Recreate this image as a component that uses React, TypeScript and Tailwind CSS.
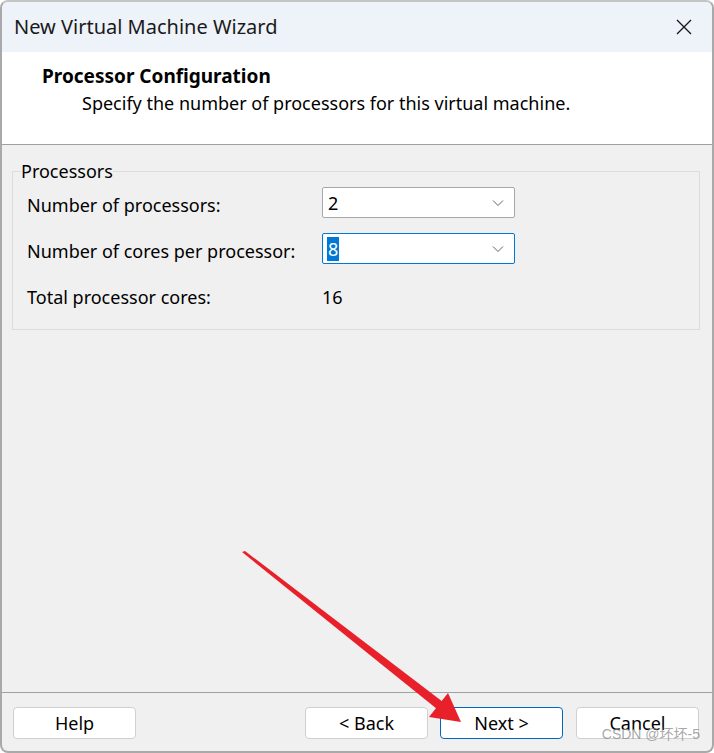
import React from 'react';

const font = { fontFamily: '"Noto Sans", "Open Sans", sans-serif' };

function Chevron() {
  return (
    <svg width="12" height="8" viewBox="0 0 12 8" className="text-[#606060]">
      <path d="M1 1.5 L6 6.5 L11 1.5" fill="none" stroke="currentColor" strokeWidth="1" />
    </svg>
  );
}

function Combo({ value, focused }: { value: string; focused?: boolean }) {
  return (
    <div
      className={
        focused
          ? 'flex h-[31px] w-[193px] items-center justify-between rounded-[2px] border border-[#0078d7] bg-white pl-[4px] pr-[10px]'
          : 'flex h-[31px] w-[193px] items-center justify-between rounded-[2px] border border-[#a8a8a8] bg-white pl-[4px] pr-[10px]'
      }
    >
      {focused ? (
        <span className="bg-[#0078d7] px-[1px] leading-[24px] text-white">{value}</span>
      ) : (
        <span className="px-[1px] leading-[24px] text-black">{value}</span>
      )}
      <Chevron />
    </div>
  );
}

function Btn({ label, primary }: { label: string; primary?: boolean }) {
  return (
    <button
      className={
        primary
          ? 'h-[32px] w-[123px] rounded-[4px] border border-[#0067c0] bg-white text-[18px] text-black'
          : 'h-[32px] w-[123px] rounded-[4px] border border-[#d0d0d0] bg-white text-[18px] text-black'
      }
    >
      {label}
    </button>
  );
}

export default function App() {
  return (
    <div className="h-[753px] w-[714px] bg-white" style={font}>
      <div className="relative flex h-full flex-col overflow-hidden rounded-[8px] border-2 border-[#a9a9a9] border-t-[#c4c4c4] bg-[#f0f0f0]">
        {/* title bar */}
        <div className="flex h-[50px] shrink-0 items-center justify-between bg-[#eef2f9] pl-[12px] pr-[20px]">
          <span className="text-[20px] text-[#1a1a1a]">New Virtual Machine Wizard</span>
          <svg width="16" height="16" viewBox="0 0 16 16">
            <path d="M1 1 L15 15 M15 1 L1 15" stroke="#1a1a1a" strokeWidth="1.4" />
          </svg>
        </div>

        {/* header */}
        <div className="h-[93px] shrink-0 border-b border-[#a0a0a0] bg-white pt-[12px]">
          <div className="pl-[40px] text-[19px] font-bold leading-[24px] text-black">Processor Configuration</div>
          <div className="mt-[3px] pl-[80px] text-[18px] leading-[24px] text-black">
            Specify the number of processors for this virtual machine.
          </div>
        </div>

        {/* body */}
        <div className="flex-1 pt-[15px]">
          <fieldset className="ml-[10px] mr-[12px] h-[170px] border border-[#dcdcdc] pl-[14px]">
            <legend className="ml-[-6px] px-0 text-[18px] leading-[22px] text-black">Processors</legend>
            <div className="mt-[5px] flex flex-col text-[18px] text-black">
              <div className="flex h-[31px] items-center">
                <span className="w-[295px] pt-[6px]">Number of processors:</span>
                <Combo value="2" />
              </div>
              <div className="mt-[15px] flex h-[31px] items-center">
                <span className="w-[295px] pt-[6px]">Number of cores per processor:</span>
                <Combo value="8" focused />
              </div>
              <div className="mt-[15px] flex h-[31px] items-center">
                <span className="w-[295px] pt-[6px]">Total processor cores:</span>
                <span className="pt-[6px]">16</span>
              </div>
            </div>
          </fieldset>
        </div>

        {/* footer */}
        <div className="flex h-[59px] shrink-0 items-start border-t border-[#a0a0a0] pl-[11px] pr-[13px] pt-[14px]">
          <Btn label="Help" />
          <div className="flex-1" />
          <Btn label="< Back" />
          <div className="w-[12px]" />
          <Btn label="Next >" primary />
          <div className="w-[13px]" />
          <Btn label="Cancel" />
        </div>

        {/* watermark */}
        <span
          className="pointer-events-none absolute bottom-[6px] right-[12px] text-[14px] text-[#8a8a8a]/75"
          style={{ fontFamily: '"Liberation Sans", "Noto Sans CJK SC", sans-serif' }}
        >
          CSDN @坏坏-5
        </span>

        {/* red annotation arrow */}
        <svg className="pointer-events-none absolute left-[-2px] top-[-2px]" width="714" height="753">
          <polygon points="242,552 245,551 443,702 437,709" fill="#e8202a" />
          <polygon points="461,722 429,717 448,693" fill="#e8202a" />
        </svg>
      </div>
    </div>
  );
}
